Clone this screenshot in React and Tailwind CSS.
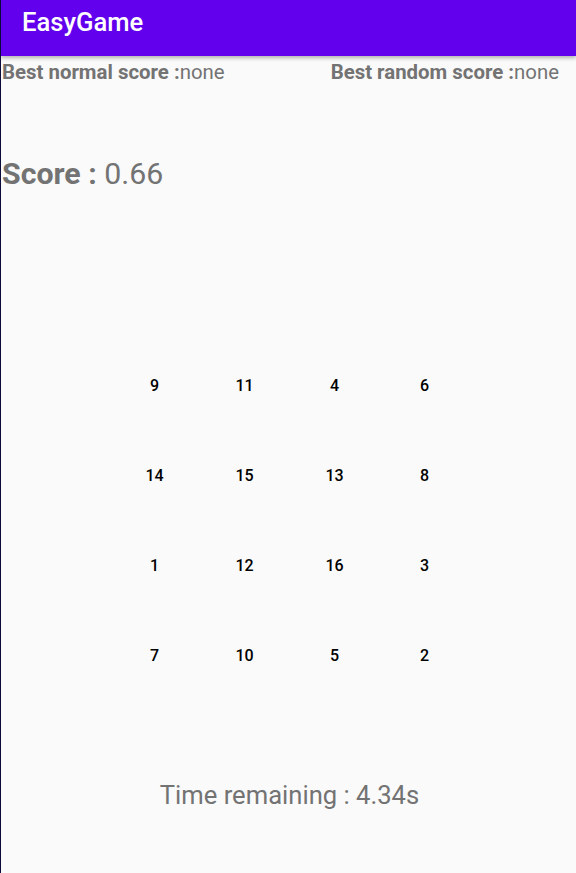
import React from "react";

const rows = [
  [9, 11, 4, 6],
  [14, 15, 13, 8],
  [1, 12, 16, 3],
  [7, 10, 5, 2],
];

export default function App() {
  return (
    <div
      className="w-[576px] h-[873px] bg-[#fafafa] border-l border-[#0b0b3b] flex flex-col overflow-hidden"
      style={{ fontFamily: "Roboto, 'Noto Sans', sans-serif" }}
    >
      <div className="h-[56px] shrink-0 bg-[#6200ee] flex items-center pl-[21px] pb-[10px] shadow-[0_2px_4px_rgba(0,0,0,0.3)] relative z-10">
        <span className="text-white text-[25.6px] font-medium leading-none">EasyGame</span>
      </div>
      <div className="flex justify-between pl-[1px] pr-[17px] pt-[4px] text-[20.4px] leading-[24px] text-[#737373]">
        <div>
          <span className="font-bold">Best normal score :</span>none
        </div>
        <div>
          <span className="font-bold">Best random score :</span>none
        </div>
      </div>
      <div className="mt-[72px] pl-[1px] text-[30.3px] leading-[36px] text-[#737373]">
        <span className="font-bold">Score : </span>0.66
      </div>
      <div className="mt-[149px] self-center ml-[2px] grid grid-cols-4 w-[360px]">
        {rows.flat().map((n) => (
          <div key={n} className="h-[90px] flex items-center justify-center text-[16px] font-medium text-black">
            {n}
          </div>
        ))}
      </div>
      <div className="mt-[79px] text-center ml-[2px] text-[25.6px] leading-[30px] text-[#737373]">
        Time remaining : 4.34s
      </div>
    </div>
  );
}
